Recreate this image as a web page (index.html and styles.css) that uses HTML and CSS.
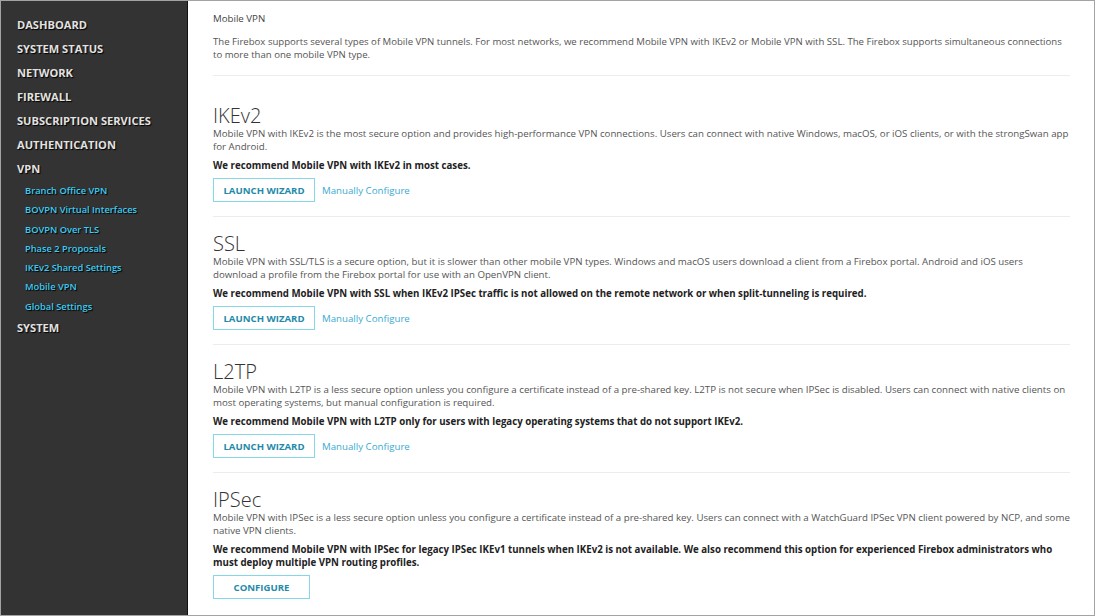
FILE: index.html
```html
<!DOCTYPE html>
<html>
<head>
<meta charset="utf-8">
<link rel="stylesheet" href="styles.css">
</head>
<body>
<div class="frame">
  <nav class="sidebar">
    <div class="nav-main">DASHBOARD</div>
    <div class="nav-main">SYSTEM STATUS</div>
    <div class="nav-main">NETWORK</div>
    <div class="nav-main">FIREWALL</div>
    <div class="nav-main">SUBSCRIPTION SERVICES</div>
    <div class="nav-main">AUTHENTICATION</div>
    <div class="nav-main">VPN</div>
    <div class="nav-sub">
      <div class="nav-item">Branch Office VPN</div>
      <div class="nav-item">BOVPN Virtual Interfaces</div>
      <div class="nav-item">BOVPN Over TLS</div>
      <div class="nav-item">Phase 2 Proposals</div>
      <div class="nav-item">IKEv2 Shared Settings</div>
      <div class="nav-item">Mobile VPN</div>
      <div class="nav-item">Global Settings</div>
    </div>
    <div class="nav-main">SYSTEM</div>
  </nav>
  <main class="content">
    <div class="crumb">Mobile VPN</div>
    <p class="intro">The Firebox supports several types of Mobile VPN tunnels. For most networks, we recommend Mobile VPN with IKEv2 or Mobile VPN with SSL. The Firebox supports simultaneous connections to more than one mobile VPN type.</p>
    <div class="divider intro-divider"></div>

    <section class="vpn">
      <h2>IKEv2</h2>
      <p class="desc">Mobile VPN with IKEv2 is the most secure option and provides high-performance VPN connections. Users can connect with native Windows, macOS, or iOS clients, or with the strongSwan app for Android.</p>
      <p class="rec">We recommend Mobile VPN with IKEv2 in most cases.</p>
      <div class="actions"><span class="btn">LAUNCH WIZARD</span><span class="link">Manually Configure</span></div>
    </section>
    <div class="divider"></div>

    <section class="vpn">
      <h2>SSL</h2>
      <p class="desc">Mobile VPN with SSL/TLS is a secure option, but it is slower than other mobile VPN types. Windows and macOS users download a client from a Firebox portal. Android and iOS users download a profile from the Firebox portal for use with an OpenVPN client.</p>
      <p class="rec">We recommend Mobile VPN with SSL when IKEv2 IPSec traffic is not allowed on the remote network or when split-tunneling is required.</p>
      <div class="actions"><span class="btn">LAUNCH WIZARD</span><span class="link">Manually Configure</span></div>
    </section>
    <div class="divider"></div>

    <section class="vpn">
      <h2>L2TP</h2>
      <p class="desc">Mobile VPN with L2TP is a less secure option unless you configure a certificate instead of a pre-shared key. L2TP is not secure when IPSec is disabled. Users can connect with native clients on most operating systems, but manual configuration is required.</p>
      <p class="rec">We recommend Mobile VPN with L2TP only for users with legacy operating systems that do not support IKEv2.</p>
      <div class="actions"><span class="btn">LAUNCH WIZARD</span><span class="link">Manually Configure</span></div>
    </section>
    <div class="divider"></div>

    <section class="vpn">
      <h2>IPSec</h2>
      <p class="desc">Mobile VPN with IPSec is a less secure option unless you configure a certificate instead of a pre-shared key. Users can connect with a WatchGuard IPSec VPN client powered by NCP, and some native VPN clients.</p>
      <p class="rec">We recommend Mobile VPN with IPSec for legacy IPSec IKEv1 tunnels when IKEv2 is not available. We also recommend this option for experienced Firebox administrators who must deploy multiple VPN routing profiles.</p>
      <div class="actions"><span class="btn btn-config">CONFIGURE</span></div>
    </section>
  </main>
</div>
</body>
</html>
```
FILE: styles.css
```css
* { box-sizing: border-box; }
html, body { margin: 0; padding: 0; }
body {
  width: 1095px;
  height: 616px;
  overflow: hidden;
  background: #fff;
  font-family: "Open Sans", "Noto Sans", sans-serif;
}
.frame {
  width: 1095px;
  height: 616px;
  border: 1px solid #a3a3a3;
  display: flex;
  overflow: hidden;
}
.sidebar {
  width: 187px;
  flex: none;
  background: #333333;
  border-right: 1px solid #111;
  padding: 12px 0 0 16px;
}
.nav-main {
  color: #e2e2e2;
  font-weight: 700;
  font-size: 11.1px;
  line-height: 24px;
  text-shadow: 1px 1px 1px #000;
}
.nav-sub {
  padding: 0 0 0 8px;
}
.nav-item {
  color: #3ccbf2;
  font-weight: 600;
  font-size: 9.3px;
  line-height: 19.25px;
  text-shadow: 1px 1px 1px #000;
}
.content {
  flex: 1;
  padding: 11px 24px 0 25px;
  color: #555;
  font-size: 9.7px;
}
.crumb {
  line-height: 14px;
  color: #444;
}
.intro {
  margin: 10px 0 0 0;
  line-height: 12.5px;
  font-size: 9.6px;
}
.divider {
  height: 1px;
  background: #ececec;
}
.intro-divider {
  margin-top: 14px;
  margin-bottom: 13px;
}
.vpn {
  padding: 16px 0 14px 0;
}
.vpn h2 {
  margin: 0;
  font-size: 20px;
  font-weight: 300;
  color: #333;
  line-height: 22px;
}
.desc {
  margin: 0;
  line-height: 13px;
}
.rec {
  margin: 6px 0 0 0;
  font-weight: 700;
  font-size: 9.7px;
  color: #222;
  line-height: 13px;
}
.actions {
  margin-top: 6px;
  display: flex;
  align-items: center;
  gap: 7px;
}
.btn {
  display: inline-flex;
  align-items: center;
  justify-content: center;
  height: 24px;
  width: 102px;
  border: 1px solid #84d6e9;
  color: #1f8aaa;
  font-weight: 700;
  font-size: 9.6px;
}
.btn-config { width: 97px; }
.link {
  color: #3aaad3;
  font-size: 9.7px;
}
```
